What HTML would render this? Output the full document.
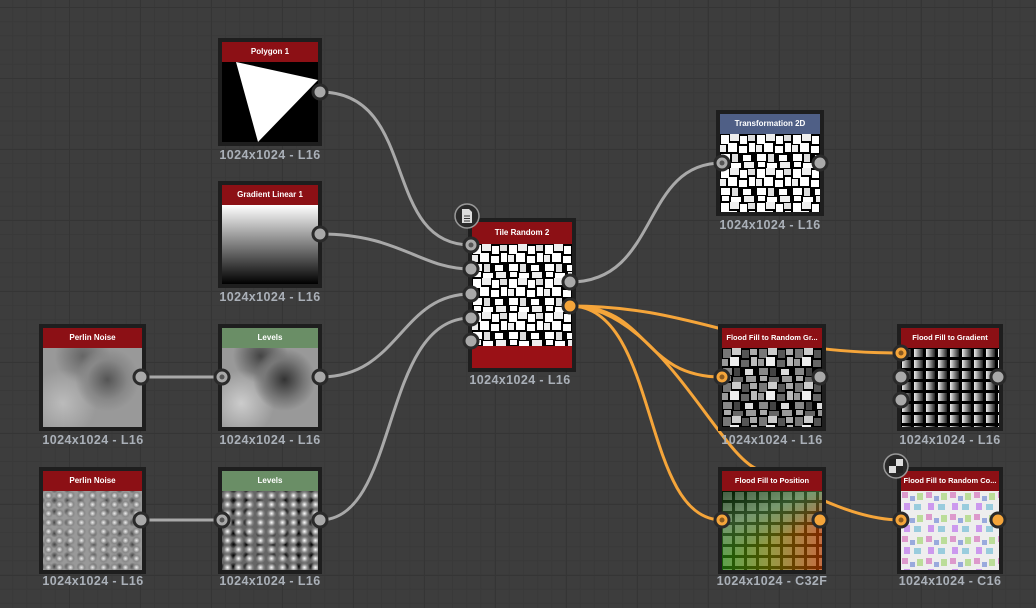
<!DOCTYPE html>
<html><head><meta charset="utf-8"><style>
*{margin:0;padding:0;box-sizing:border-box}
body{width:1036px;height:608px;overflow:hidden;position:relative;font-family:"Liberation Sans",sans-serif;
background-color:#3d3d3d;
background-image:linear-gradient(#353535 1px,transparent 1px),linear-gradient(90deg,#353535 1px,transparent 1px),linear-gradient(#393939 1px,transparent 1px),linear-gradient(90deg,#393939 1px,transparent 1px);
background-size:71px 71px,71px 71px,14.2px 14.2px,14.2px 14.2px;background-position:-2px 7px,-2px 7px,-2px 7px,-2px 7px}
svg.l{position:absolute;left:0;top:0}
.n{position:absolute;background:#1e1e1e;padding:4px}
.h{height:20px;background:#8c1015;color:#fff;font-size:8px;font-weight:bold;text-align:center;line-height:20px;white-space:nowrap;overflow:hidden}
.g{background:#6a8e66}.b{background:#4f5f86}
.img{position:relative;overflow:hidden}
.lab{position:absolute;width:130px;text-align:center;color:#aab0b8;font-size:12.5px;font-weight:bold;letter-spacing:.4px}
</style></head><body>
<svg class="l" width="1036" height="608">
<g fill="none" stroke="#a9a9a9" stroke-width="3">
<path d="M320 92 C420 92 380 245 471 245"/>
<path d="M320 234 C400 234 420 269 471 269"/>
<path d="M320 377 C400 377 400 294 471 294"/>
<path d="M320 520 C400 520 380 318 471 318"/>
<path d="M141 377 L222 377"/><path d="M141 520 L222 520"/>
<path d="M570 282 C660 282 640 163 722 163"/>
</g>
<g fill="none" stroke="#f5a53a" stroke-width="3">
<path d="M570 306 C650 306 640 377 722 377"/>
<path d="M570 306 C660 306 640 520 722 520"/>
<path d="M570 306 C700 306 740 353 901 353"/>
<path d="M570 306 C660 306 720 460 760 470 C820 500 860 520 901 520"/>
</g>
</svg>

<svg width="0" height="0" style="position:absolute"><defs>
<pattern id="t" width="36" height="34" patternUnits="userSpaceOnUse"><rect width="36" height="34" fill="#000"/>
<rect x="1" y="1" width="8" height="9" fill="#fff"/><rect x="10" y="0" width="9" height="7" fill="#eee"/><rect x="20" y="2" width="7" height="8" fill="#fff"/><rect x="28" y="1" width="7" height="6" fill="#ddd"/>
<rect x="0" y="11" width="6" height="7" fill="#eee"/><rect x="8" y="9" width="9" height="9" fill="#fff"/><rect x="19" y="12" width="8" height="7" fill="#fff"/><rect x="29" y="9" width="6" height="9" fill="#fff"/>
<rect x="1" y="20" width="9" height="7" fill="#fff"/><rect x="12" y="20" width="6" height="8" fill="#ddd"/><rect x="23" y="21" width="8" height="6" fill="#fff"/>
<rect x="2" y="28" width="7" height="5" fill="#fff"/><rect x="11" y="29" width="10" height="5" fill="#fff"/><rect x="24" y="28" width="10" height="6" fill="#eee"/></pattern>
<pattern id="t2" width="36" height="34" patternUnits="userSpaceOnUse"><rect width="36" height="34" fill="#000"/>
<rect x="1" y="1" width="8" height="9" fill="#777"/><rect x="10" y="0" width="9" height="7" fill="#ccc"/><rect x="20" y="2" width="7" height="8" fill="#555"/><rect x="28" y="1" width="7" height="6" fill="#aaa"/>
<rect x="0" y="11" width="6" height="7" fill="#999"/><rect x="8" y="9" width="9" height="9" fill="#eee"/><rect x="19" y="12" width="8" height="7" fill="#666"/><rect x="29" y="9" width="6" height="9" fill="#bbb"/>
<rect x="1" y="20" width="9" height="7" fill="#888"/><rect x="12" y="20" width="6" height="8" fill="#444"/><rect x="23" y="21" width="8" height="6" fill="#ddd"/>
<rect x="2" y="28" width="7" height="5" fill="#aaa"/><rect x="11" y="29" width="10" height="5" fill="#666"/><rect x="24" y="28" width="10" height="6" fill="#999"/></pattern>
<linearGradient id="pg" x1="0" y1="0" x2="1" y2="0"><stop offset="0" stop-color="#eee"/><stop offset="1" stop-color="#222"/></linearGradient>
<pattern id="t4" width="12" height="11" patternUnits="userSpaceOnUse"><rect width="12" height="11" fill="#000"/><rect x="1" y="1" width="9" height="8" fill="url(#pg)"/></pattern>
<pattern id="t3" width="12" height="11" patternUnits="userSpaceOnUse"><rect width="12" height="11" fill="#000"/><rect x="1" y="1" width="9" height="8" fill="#888"/></pattern>
<pattern id="t5" width="24" height="22" patternUnits="userSpaceOnUse"><rect width="24" height="22" fill="#eee"/><rect x="1" y="1" width="6" height="6" fill="#d9c"/><rect x="9" y="5" width="5" height="5" fill="#9ad"/><rect x="16" y="2" width="6" height="7" fill="#bd9"/><rect x="3" y="12" width="6" height="7" fill="#c9e"/><rect x="13" y="13" width="7" height="6" fill="#9cd"/></pattern>
</defs></svg>

<div class="n" style="left:218px;top:38px;width:104px;height:108px"><div class="h">Polygon 1</div>
<div class="img" style="height:80px;background:#000"><svg width="96" height="80"><polygon points="14,0 96,18 36,80" fill="#fff"/></svg></div></div>
<div class="lab" style="left:205px;top:148px">1024x1024 - L16</div>

<div class="n" style="left:218px;top:181px;width:104px;height:107px"><div class="h">Gradient Linear 1</div>
<div class="img" style="height:79px;background:linear-gradient(#fff,#000)"></div></div>
<div class="lab" style="left:205px;top:290px">1024x1024 - L16</div>

<div class="n" style="left:39px;top:324px;width:107px;height:107px"><div class="h">Perlin Noise</div>
<div class="img" style="height:79px;background:radial-gradient(circle at 65% 40%,#555 0,#888 25%,transparent 40%),radial-gradient(circle at 20% 70%,#bbb 0,transparent 35%),radial-gradient(circle at 40% 10%,#666,transparent 30%),#999"></div></div>
<div class="lab" style="left:28px;top:433px">1024x1024 - L16</div>

<div class="n" style="left:218px;top:324px;width:104px;height:107px"><div class="h g">Levels</div>
<div class="img" style="height:79px;background:radial-gradient(circle at 65% 40%,#333 0,#777 25%,transparent 40%),radial-gradient(circle at 20% 70%,#ccc 0,transparent 35%),radial-gradient(circle at 40% 10%,#444,transparent 30%),#999"></div></div>
<div class="lab" style="left:205px;top:433px">1024x1024 - L16</div>

<div class="n" style="left:39px;top:467px;width:107px;height:107px"><div class="h">Perlin Noise</div>
<div class="img" style="height:79px;background:radial-gradient(circle,#eee 0,#888 3px,transparent 5px) 0 0/11px 9px,radial-gradient(circle,#444 0,transparent 4px) 5px 4px/13px 11px,#999"></div></div>
<div class="lab" style="left:28px;top:574px">1024x1024 - L16</div>

<div class="n" style="left:218px;top:467px;width:104px;height:107px"><div class="h g">Levels</div>
<div class="img" style="height:79px;background:radial-gradient(circle,#fff 0,#888 3px,transparent 5px) 0 0/11px 9px,radial-gradient(circle,#000 0,transparent 4px) 5px 4px/13px 11px,#666"></div></div>
<div class="lab" style="left:205px;top:574px">1024x1024 - L16</div>

<div class="n" style="left:468px;top:218px;width:108px;height:154px"><div class="h" style="height:22px;line-height:22px">Tile Random 2</div>
<div class="img" style="height:102px"><svg width="100" height="102"><rect width="100" height="102" fill="url(#t)"/></svg></div>
<div style="height:22px;background:#9a1116"></div></div>
<div class="lab" style="left:455px;top:373px">1024x1024 - L16</div>

<div class="n" style="left:716px;top:110px;width:108px;height:106px"><div class="h b">Transformation 2D</div>
<div class="img" style="height:78px"><svg width="100" height="78"><rect width="100" height="78" fill="url(#t)"/></svg></div></div>
<div class="lab" style="left:705px;top:218px">1024x1024 - L16</div>

<div class="n" style="left:718px;top:324px;width:108px;height:107px"><div class="h" style="font-size:7.5px">Flood Fill to Random Gr...</div>
<div class="img" style="height:79px"><svg width="100" height="79"><rect width="100" height="79" fill="url(#t2)"/></svg></div></div>
<div class="lab" style="left:707px;top:433px">1024x1024 - L16</div>

<div class="n" style="left:897px;top:324px;width:106px;height:107px"><div class="h" style="font-size:7.5px">Flood Fill to Gradient</div>
<div class="img" style="height:79px"><svg width="98" height="79"><rect width="98" height="79" fill="url(#t4)"/></svg></div></div>
<div class="lab" style="left:885px;top:433px">1024x1024 - L16</div>

<div class="n" style="left:718px;top:467px;width:108px;height:107px"><div class="h" style="font-size:7.5px">Flood Fill to Position</div>
<div class="img" style="height:79px;background:linear-gradient(160deg,#030 0,#6a5 30%,transparent 60%),linear-gradient(90deg,#3b1 0,#aa0 50%,#f50 100%)"><svg width="100" height="79" style="position:absolute;left:0;top:0;opacity:.5"><rect width="100" height="79" fill="url(#t3)"/></svg></div></div>
<div class="lab" style="left:707px;top:574px">1024x1024 - C32F</div>

<div class="n" style="left:897px;top:467px;width:106px;height:107px"><div class="h" style="font-size:7.5px">Flood Fill to Random Co...</div>
<div class="img" style="height:79px"><svg width="98" height="79"><rect width="98" height="79" fill="url(#t5)"/></svg></div></div>
<div class="lab" style="left:885px;top:574px">1024x1024 - C16</div>

<svg class="l" width="1036" height="608">
<g stroke="#2a2a2a" stroke-width="3" fill="#a9a9a9">
<circle cx="320" cy="92" r="7"/><circle cx="320" cy="234" r="7"/><circle cx="320" cy="377" r="7"/><circle cx="320" cy="520" r="7"/>
<circle cx="141" cy="377" r="7"/><circle cx="141" cy="520" r="7"/>
<circle cx="222" cy="377" r="7"/><circle cx="222" cy="520" r="7"/>
<circle cx="471" cy="245" r="7"/><circle cx="471" cy="269" r="7"/><circle cx="471" cy="294" r="7"/><circle cx="471" cy="318" r="7"/><circle cx="471" cy="341" r="7"/>
<circle cx="570" cy="282" r="7"/><circle cx="722" cy="163" r="7"/><circle cx="820" cy="163" r="7"/>
<circle cx="820" cy="377" r="7"/><circle cx="901" cy="377" r="7"/><circle cx="901" cy="400" r="7"/><circle cx="998" cy="377" r="7"/>
</g>
<g stroke="#2a2a2a" stroke-width="3" fill="#f5a53a">
<circle cx="570" cy="306" r="7"/><circle cx="722" cy="377" r="7"/><circle cx="722" cy="520" r="7"/><circle cx="820" cy="520" r="7"/>
<circle cx="901" cy="353" r="7"/><circle cx="901" cy="520" r="7"/><circle cx="998" cy="520" r="7"/>
</g>
<g fill="#555"><circle cx="222" cy="377" r="2.5"/><circle cx="222" cy="520" r="2.5"/><circle cx="471" cy="245" r="2.5"/><circle cx="722" cy="163" r="2.5"/></g>
<g fill="#8a5a20"><circle cx="722" cy="377" r="2.5"/><circle cx="722" cy="520" r="2.5"/><circle cx="901" cy="353" r="2.5"/><circle cx="901" cy="520" r="2.5"/></g>
<circle cx="467" cy="216" r="12" fill="#2a2a2a" stroke="#999" stroke-width="1.5"/>
<path d="M462 209 h7 l3 3 v11 h-10z" fill="#ddd"/><g stroke="#333" stroke-width="1"><path d="M464 216h6M464 218.5h6M464 221h6"/></g>
<circle cx="896" cy="466" r="12" fill="#2a2a2a" stroke="#999" stroke-width="1.5"/>
<rect x="889" y="459" width="14" height="14" fill="#ddd"/><rect x="889" y="459" width="7" height="7" fill="#222"/><rect x="896" y="466" width="7" height="7" fill="#222"/>
</svg>
</body></html>
